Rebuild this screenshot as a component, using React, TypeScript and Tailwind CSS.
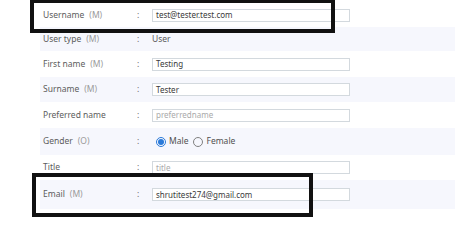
const rows = [
  { label: 'Username', req: '(M)', kind: 'input', value: 'test@tester.test.com', h: 'h-[24px]', bg: false },
  { label: 'User type', req: '(M)', kind: 'text', value: 'User', h: 'h-[24px]', bg: true },
  { label: 'First name', req: '(M)', kind: 'input', value: 'Testing', h: 'h-[26px]', bg: false },
  { label: 'Surname', req: '(M)', kind: 'input', value: 'Tester', h: 'h-[25px]', bg: true },
  { label: 'Preferred name', req: '', kind: 'placeholder', value: 'preferredname', h: 'h-[26px]', bg: false },
  { label: 'Gender', req: '(O)', kind: 'radio', value: '', h: 'h-[27px]', bg: true },
  { label: 'Title', req: '', kind: 'placeholder', value: 'title', h: 'h-[25px]', bg: false },
  { label: 'Email', req: '(M)', kind: 'input', value: 'shrutitest274@gmail.com', h: 'h-[29px]', bg: true },
];

function Value({ row }: { row: (typeof rows)[number] }) {
  if (row.kind === 'text') return <span className="text-[#5a5a5a]">{row.value}</span>;
  if (row.kind === 'radio') {
    return (
      <div className="flex items-center text-[#505050]">
        <span className="w-[10px] h-[10px] rounded-full border border-[#2a7ad9] flex items-center justify-center ml-[4px]">
          <span className="w-[6px] h-[6px] rounded-full bg-[#2a7ad9]" />
        </span>
        <span className="ml-[3px]">Male</span>
        <span className="w-[10px] h-[10px] rounded-full border border-[#808080] ml-[5px]" />
        <span className="ml-[3px]">Female</span>
      </div>
    );
  }
  return (
    <div className="w-[198px] h-[13px] border border-[#d3d9de] bg-white flex items-center px-[3px] text-[8px]">
      <span className={row.kind === 'placeholder' ? 'text-[#aaa]' : 'text-[#3a3a3a]'}>{row.value}</span>
    </div>
  );
}

export default function App() {
  return (
    <div className="relative w-[474px] h-[244px] bg-white overflow-hidden font-['Noto_Sans',sans-serif] text-[8.5px]">
      <div className="flex flex-col pt-[3px] pl-[40px] w-[455px]">
        {rows.map((row) => (
          <div key={row.label} className={`flex items-center ${row.h} ${row.bg ? 'bg-[#f6f7fd]' : ''}`}>
            <div className="w-[97px] pl-[3px] text-[#5c5c5c]">
              {row.label}
              {row.req && <span className="ml-[5px] text-[#9a9a9a]">{row.req}</span>}
            </div>
            <div className="w-[15px] text-[#666]">:</div>
            <Value row={row} />
          </div>
        ))}
      </div>

      {/* annotation boxes */}
      <div className="absolute left-[30px] top-[-1px] w-[305px] h-[34px] border-[4px] border-[#111]" />
      <div className="absolute left-[32px] top-[173px] w-[281px] h-[44px] border-[4px] border-[#111]" />
    </div>
  );
}
